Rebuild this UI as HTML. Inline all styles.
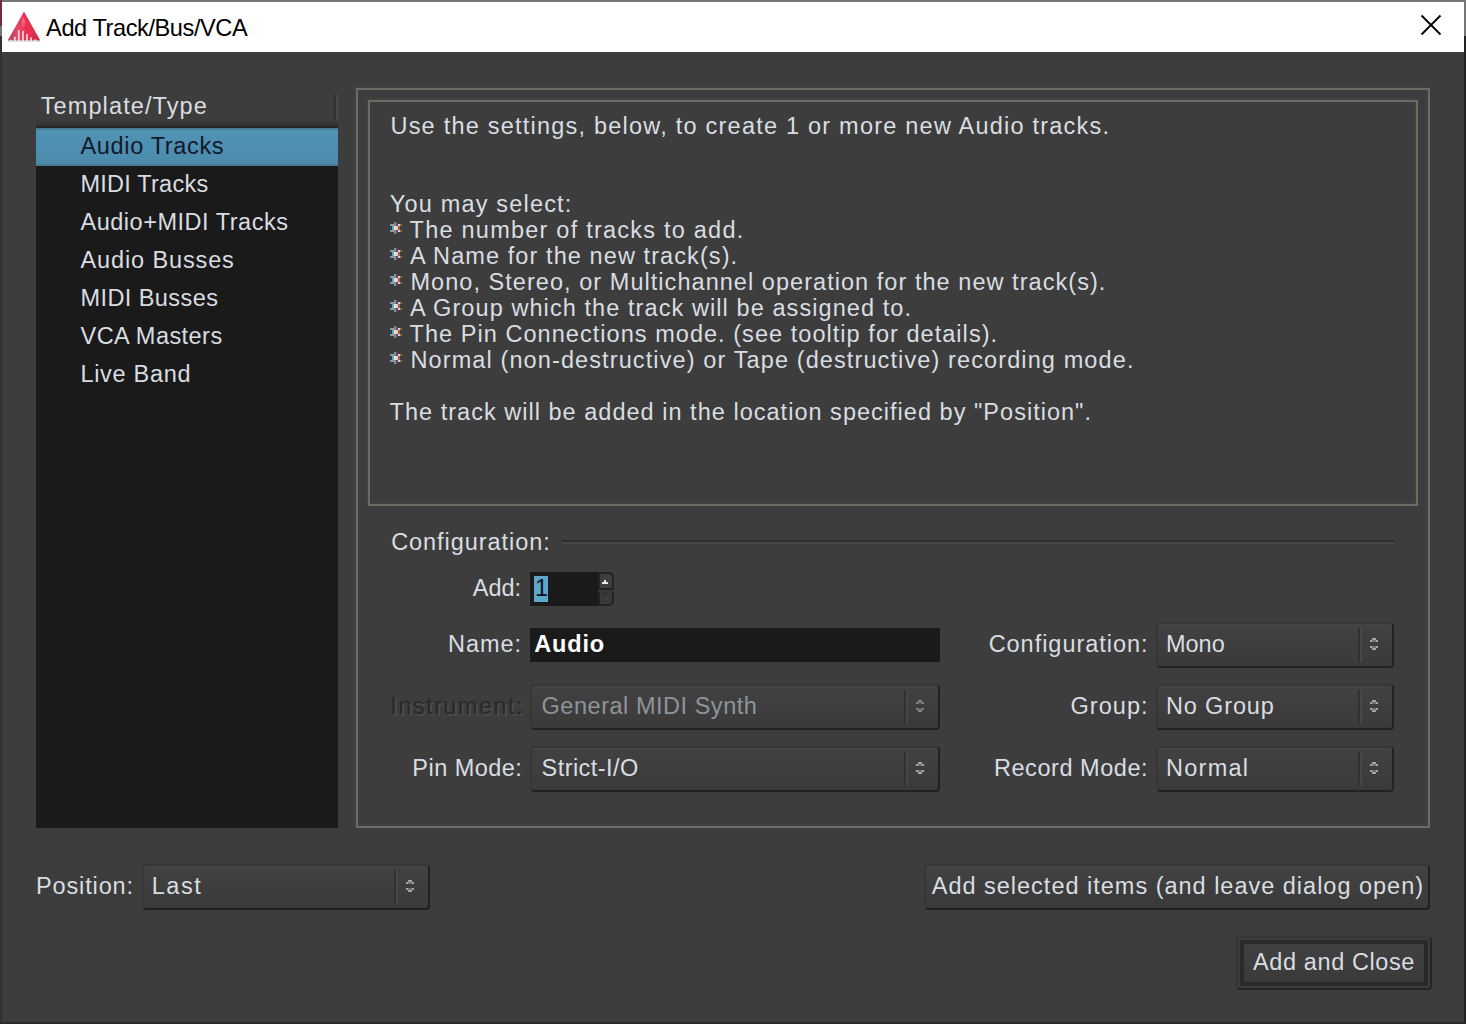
<!DOCTYPE html>
<html>
<head>
<meta charset="utf-8">
<title>Add Track/Bus/VCA</title>
<style>
html,body{margin:0;padding:0;}
body{width:1466px;height:1024px;overflow:hidden;background:#3d3d3d;position:relative;font-family:"Liberation Sans",sans-serif;}
.a{position:absolute;}
.t{position:absolute;white-space:pre;line-height:30px;height:30px;}
/* window chrome */
#titlebar{left:2px;top:2px;width:1462px;height:50px;background:#fff;}
#bt{left:0;top:0;width:1466px;height:2px;background:#767676;}
#bl1{left:0;top:0;width:2px;height:26px;background:#6a3038;}
#bl2{left:0;top:26px;width:2px;height:10px;background:#767676;}
#bl3{left:0;top:36px;width:2px;height:988px;background:#323232;}
#br1{left:1464px;top:0;width:2px;height:36px;background:#767676;}
#br2{left:1464px;top:36px;width:2px;height:988px;background:#222;}
#bb{left:0;top:1022px;width:1466px;height:2px;background:#2a2a2a;}
/* list */
#hdrshade{left:36px;top:120px;width:302px;height:6px;background:linear-gradient(#3d3d3d,#323232);}
#hdrline{left:36px;top:126px;width:302px;height:2px;background:#272425;}
#hsep1{left:334px;top:94px;width:2px;height:26px;background:#323232;}
#hsep2{left:336px;top:94px;width:2px;height:26px;background:#484848;}
#list{left:36px;top:128px;width:302px;height:700px;background:#1a1a1a;}
#sel{left:36px;top:128px;width:302px;height:38px;background:linear-gradient(#4f94b6,#4c8aab);box-shadow:inset 0 2px 0 #497a93, inset 0 -2px 0 #497a93;}
/* frames */
.fd{border:2px solid #41413f;box-sizing:border-box;}
.fl{border:2px solid #6b6c64;box-sizing:border-box;}
/* combo */
.combo{box-sizing:border-box;border-radius:4px;border:2px solid;border-color:#373737 #222 #222 #373737;background:linear-gradient(#444 0,#444 2px,#414141 2px,#3a3a3a 100%);background-clip:padding-box;}
.csep{width:2px;height:34px;background:#313131;box-shadow:2px 0 0 #474747;}
.btn{box-sizing:border-box;border-radius:4px;border:2px solid;border-color:#373737 #222 #222 #373737;background:linear-gradient(#444 0,#444 2px,#414141 2px,#3a3a3a 100%);background-clip:padding-box;}
</style>
</head>
<body>
<!-- window chrome -->
<div class="a" id="titlebar"></div>
<div class="a" id="bt"></div>
<div class="a" id="bl1"></div><div class="a" id="bl2"></div><div class="a" id="bl3"></div>
<div class="a" id="br1"></div><div class="a" id="br2"></div>
<div class="a" id="bb"></div>
<!-- app icon -->
<svg class="a" style="left:4px;top:8px" width="40" height="38" viewBox="4 8 40 38">
  <defs>
    <linearGradient id="ig" x1="0" y1="0" x2="1" y2="0"><stop offset="0" stop-color="#b93653"/><stop offset="0.28" stop-color="#e04a68"/><stop offset="0.55" stop-color="#f02c4e"/><stop offset="0.8" stop-color="#d83452"/><stop offset="1" stop-color="#b8304c"/></linearGradient>
    <linearGradient id="ih" x1="0" y1="0" x2="0" y2="1"><stop offset="0" stop-color="#fff" stop-opacity="0.4"/><stop offset="1" stop-color="#fff" stop-opacity="0"/></linearGradient>
    <filter id="ib" x="-10%" y="-10%" width="120%" height="120%"><feGaussianBlur stdDeviation="0.75"/></filter>
  </defs>
  <g filter="url(#ib)">
    <path d="M24 11.6 L40.3 40.6 L7.7 40.6 Z" fill="url(#ig)"/>
    <path d="M23 17 L25.5 22 L24 30 L20 30 Z" fill="url(#ih)"/>
    <rect x="8" y="40.2" width="32" height="1.4" fill="#b0b0b0" opacity="0.7"/>
    <g fill="#f6eef0" opacity="0.85">
    <rect x="13.9" y="36.4" width="1.8" height="6" rx="0.9"/>
    <rect x="17.9" y="29.8" width="1.8" height="12.6" rx="0.9"/>
    <rect x="22" y="30.6" width="1.8" height="11.8" rx="0.9"/>
    <rect x="26.1" y="33.8" width="1.8" height="8.6" rx="0.9"/>
    <rect x="30.2" y="37.2" width="1.8" height="5.2" rx="0.9"/>
    <rect x="34.3" y="39.2" width="1.8" height="3.2" rx="0.9"/>
    <rect x="10" y="39.6" width="1.8" height="2.8" rx="0.9"/>
    </g>
  </g>
</svg>
<!-- close X -->
<svg class="a" style="left:1416px;top:10px" width="30" height="30" viewBox="0 0 30 30">
  <path d="M5.5 5.5 L24.5 24.5 M24.5 5.5 L5.5 24.5" stroke="#000" stroke-width="1.8" fill="none"/>
</svg>
<!-- list -->
<div class="a" id="hdrshade"></div><div class="a" id="hdrline"></div>
<div class="a" id="hsep1"></div><div class="a" id="hsep2"></div>
<div class="a" id="list"></div>
<div class="a" id="sel"></div>
<!-- frames: outer -->
<div class="a fd" style="left:354px;top:86px;width:1074px;height:740px"></div>
<div class="a fl" style="left:356px;top:88px;width:1074px;height:740px"></div>
<!-- frames: inner -->
<div class="a fd" style="left:366px;top:98px;width:1050px;height:406px"></div>
<div class="a fl" style="left:368px;top:100px;width:1050px;height:406px"></div>
<!-- config separator -->
<div class="a" style="left:562px;top:540px;width:832px;height:2px;background:#2e2e2e"></div>
<div class="a" style="left:562px;top:542px;width:832px;height:2px;background:#474747"></div>
<!-- spin button -->
<div class="a" style="left:530px;top:572px;width:84px;height:34px;background:#232323;border-radius:0 5px 5px 0"></div>
<div class="a" style="left:530px;top:572px;width:68px;height:34px;background:#1a1a1a"></div>
<div class="a" style="left:534px;top:576px;width:14px;height:26px;background:#5ea7cb"></div>
<div class="a" style="left:600px;top:574px;width:12px;height:14px;background:#3e3e3e;border-radius:0 3px 0 0"></div>
<div class="a" style="left:600px;top:592px;width:12px;height:12px;background:#3a3a3a;border-radius:0 0 3px 0"></div>
<div class="a" style="left:598px;top:590px;width:16px;height:2px;background:#383838"></div>
<svg class="a" style="left:602px;top:580px" width="6" height="4" viewBox="0 0 6 4" shape-rendering="crispEdges"><path d="M2 0h2v2h-2z M0 2h6v2h-6z" fill="#e6e6e6"/></svg>
<svg class="a" style="left:602px;top:592px" width="6" height="4" viewBox="0 0 6 4" shape-rendering="crispEdges"><path d="M0 0h6v2h-6z M2 2h2v2h-2z" fill="#323232"/></svg>
<!-- name entry -->
<div class="a" style="left:530px;top:628px;width:410px;height:34px;background:#1a1a1a"></div>
<!-- combos -->
<div class="a combo" style="left:530px;top:684px;width:410px;height:46px"></div>
<div class="a combo" style="left:530px;top:746px;width:410px;height:46px"></div>
<div class="a combo" style="left:1156px;top:622px;width:238px;height:46px"></div>
<div class="a combo" style="left:1156px;top:684px;width:238px;height:46px"></div>
<div class="a combo" style="left:1156px;top:746px;width:238px;height:46px"></div>
<div class="a combo" style="left:142px;top:864px;width:288px;height:46px"></div>
<!-- combo separators -->
<div class="a csep" style="left:904px;top:690px"></div>
<div class="a csep" style="left:904px;top:752px"></div>
<div class="a csep" style="left:1358px;top:628px"></div>
<div class="a csep" style="left:1358px;top:690px"></div>
<div class="a csep" style="left:1358px;top:752px"></div>
<div class="a csep" style="left:394px;top:870px"></div>
<!-- combo arrows -->
<svg class="a" style="left:916px;top:700px" width="8" height="12" viewBox="0 0 8 12" shape-rendering="crispEdges"><path d="M2 0h4v2h-4z M0 2h2v2h-2z M6 2h2v2h-2z M0 8h2v2h-2z M6 8h2v2h-2z M2 10h4v2h-4z" fill="#83837d"/><path d="M2 2h4v2h-4z M2 8h4v2h-4z" fill="#62625e"/></svg>
<svg class="a" style="left:916px;top:762px" width="8" height="12" viewBox="0 0 8 12" shape-rendering="crispEdges"><path d="M2 0h4v2h-4z M0 2h2v2h-2z M6 2h2v2h-2z M0 8h2v2h-2z M6 8h2v2h-2z M2 10h4v2h-4z" fill="#a6a69e"/><path d="M2 2h4v2h-4z M2 8h4v2h-4z" fill="#74746e"/></svg>
<svg class="a" style="left:1370px;top:638px" width="8" height="12" viewBox="0 0 8 12" shape-rendering="crispEdges"><path d="M2 0h4v2h-4z M0 2h2v2h-2z M6 2h2v2h-2z M0 8h2v2h-2z M6 8h2v2h-2z M2 10h4v2h-4z" fill="#a6a69e"/><path d="M2 2h4v2h-4z M2 8h4v2h-4z" fill="#74746e"/></svg>
<svg class="a" style="left:1370px;top:700px" width="8" height="12" viewBox="0 0 8 12" shape-rendering="crispEdges"><path d="M2 0h4v2h-4z M0 2h2v2h-2z M6 2h2v2h-2z M0 8h2v2h-2z M6 8h2v2h-2z M2 10h4v2h-4z" fill="#a6a69e"/><path d="M2 2h4v2h-4z M2 8h4v2h-4z" fill="#74746e"/></svg>
<svg class="a" style="left:1370px;top:762px" width="8" height="12" viewBox="0 0 8 12" shape-rendering="crispEdges"><path d="M2 0h4v2h-4z M0 2h2v2h-2z M6 2h2v2h-2z M0 8h2v2h-2z M6 8h2v2h-2z M2 10h4v2h-4z" fill="#a6a69e"/><path d="M2 2h4v2h-4z M2 8h4v2h-4z" fill="#74746e"/></svg>
<svg class="a" style="left:406px;top:880px" width="8" height="12" viewBox="0 0 8 12" shape-rendering="crispEdges"><path d="M2 0h4v2h-4z M0 2h2v2h-2z M6 2h2v2h-2z M0 8h2v2h-2z M6 8h2v2h-2z M2 10h4v2h-4z" fill="#a6a69e"/><path d="M2 2h4v2h-4z M2 8h4v2h-4z" fill="#74746e"/></svg>
<!-- buttons -->
<div class="a btn" style="left:924px;top:864px;width:506px;height:46px"></div>
<div class="a" style="left:1236px;top:936px;width:196px;height:54px;box-sizing:border-box;border:2px solid;border-color:#363636 #242424 #242424 #363636;border-radius:4px"></div>
<div class="a" style="left:1240px;top:940px;width:188px;height:46px;box-sizing:border-box;border:4px solid #2a2a2a;background:linear-gradient(#414141,#3a3a3a)"></div>
<!-- asterisks -->
<svg class="a" style="left:390px;top:222px" width="12" height="12" viewBox="0 0 6 6" shape-rendering="crispEdges"><path d="M2 0h1v1h-1z M2 5h1v1h-1z M2 1h1v1h-1z M2 4h1v1h-1z" fill="#4aa8a0"/><path d="M3 0h1v1h-1z M3 5h1v1h-1z" fill="#8c3444"/><path d="M0 1h1v1h-1z M0 4h1v1h-1z" fill="#55a8ee"/><path d="M1 1h1v1h-1z M1 4h1v1h-1z" fill="#dc8850"/><path d="M3 1h1v1h-1z M3 4h1v1h-1z" fill="#9c2c68"/><path d="M4 1h1v1h-1z M4 4h1v1h-1z" fill="#a8e4e4"/><path d="M5 1h1v1h-1z M5 4h1v1h-1z M4 2h1v2h-1z" fill="#9c6834"/><path d="M1 2h1v2h-1z" fill="#58a8c8"/><path d="M2 2h1v2h-1z" fill="#e8e0e0"/><path d="M3 2h1v2h-1z" fill="#e8c8cc"/></svg>\n<svg class="a" style="left:390px;top:248px" width="12" height="12" viewBox="0 0 6 6" shape-rendering="crispEdges"><path d="M2 0h1v1h-1z M2 5h1v1h-1z M2 1h1v1h-1z M2 4h1v1h-1z" fill="#4aa8a0"/><path d="M3 0h1v1h-1z M3 5h1v1h-1z" fill="#8c3444"/><path d="M0 1h1v1h-1z M0 4h1v1h-1z" fill="#55a8ee"/><path d="M1 1h1v1h-1z M1 4h1v1h-1z" fill="#dc8850"/><path d="M3 1h1v1h-1z M3 4h1v1h-1z" fill="#9c2c68"/><path d="M4 1h1v1h-1z M4 4h1v1h-1z" fill="#a8e4e4"/><path d="M5 1h1v1h-1z M5 4h1v1h-1z M4 2h1v2h-1z" fill="#9c6834"/><path d="M1 2h1v2h-1z" fill="#58a8c8"/><path d="M2 2h1v2h-1z" fill="#e8e0e0"/><path d="M3 2h1v2h-1z" fill="#e8c8cc"/></svg>\n<svg class="a" style="left:390px;top:274px" width="12" height="12" viewBox="0 0 6 6" shape-rendering="crispEdges"><path d="M2 0h1v1h-1z M2 5h1v1h-1z M2 1h1v1h-1z M2 4h1v1h-1z" fill="#4aa8a0"/><path d="M3 0h1v1h-1z M3 5h1v1h-1z" fill="#8c3444"/><path d="M0 1h1v1h-1z M0 4h1v1h-1z" fill="#55a8ee"/><path d="M1 1h1v1h-1z M1 4h1v1h-1z" fill="#dc8850"/><path d="M3 1h1v1h-1z M3 4h1v1h-1z" fill="#9c2c68"/><path d="M4 1h1v1h-1z M4 4h1v1h-1z" fill="#a8e4e4"/><path d="M5 1h1v1h-1z M5 4h1v1h-1z M4 2h1v2h-1z" fill="#9c6834"/><path d="M1 2h1v2h-1z" fill="#58a8c8"/><path d="M2 2h1v2h-1z" fill="#e8e0e0"/><path d="M3 2h1v2h-1z" fill="#e8c8cc"/></svg>\n<svg class="a" style="left:390px;top:300px" width="12" height="12" viewBox="0 0 6 6" shape-rendering="crispEdges"><path d="M2 0h1v1h-1z M2 5h1v1h-1z M2 1h1v1h-1z M2 4h1v1h-1z" fill="#4aa8a0"/><path d="M3 0h1v1h-1z M3 5h1v1h-1z" fill="#8c3444"/><path d="M0 1h1v1h-1z M0 4h1v1h-1z" fill="#55a8ee"/><path d="M1 1h1v1h-1z M1 4h1v1h-1z" fill="#dc8850"/><path d="M3 1h1v1h-1z M3 4h1v1h-1z" fill="#9c2c68"/><path d="M4 1h1v1h-1z M4 4h1v1h-1z" fill="#a8e4e4"/><path d="M5 1h1v1h-1z M5 4h1v1h-1z M4 2h1v2h-1z" fill="#9c6834"/><path d="M1 2h1v2h-1z" fill="#58a8c8"/><path d="M2 2h1v2h-1z" fill="#e8e0e0"/><path d="M3 2h1v2h-1z" fill="#e8c8cc"/></svg>\n<svg class="a" style="left:390px;top:326px" width="12" height="12" viewBox="0 0 6 6" shape-rendering="crispEdges"><path d="M2 0h1v1h-1z M2 5h1v1h-1z M2 1h1v1h-1z M2 4h1v1h-1z" fill="#4aa8a0"/><path d="M3 0h1v1h-1z M3 5h1v1h-1z" fill="#8c3444"/><path d="M0 1h1v1h-1z M0 4h1v1h-1z" fill="#55a8ee"/><path d="M1 1h1v1h-1z M1 4h1v1h-1z" fill="#dc8850"/><path d="M3 1h1v1h-1z M3 4h1v1h-1z" fill="#9c2c68"/><path d="M4 1h1v1h-1z M4 4h1v1h-1z" fill="#a8e4e4"/><path d="M5 1h1v1h-1z M5 4h1v1h-1z M4 2h1v2h-1z" fill="#9c6834"/><path d="M1 2h1v2h-1z" fill="#58a8c8"/><path d="M2 2h1v2h-1z" fill="#e8e0e0"/><path d="M3 2h1v2h-1z" fill="#e8c8cc"/></svg>\n<svg class="a" style="left:390px;top:352px" width="12" height="12" viewBox="0 0 6 6" shape-rendering="crispEdges"><path d="M2 0h1v1h-1z M2 5h1v1h-1z M2 1h1v1h-1z M2 4h1v1h-1z" fill="#4aa8a0"/><path d="M3 0h1v1h-1z M3 5h1v1h-1z" fill="#8c3444"/><path d="M0 1h1v1h-1z M0 4h1v1h-1z" fill="#55a8ee"/><path d="M1 1h1v1h-1z M1 4h1v1h-1z" fill="#dc8850"/><path d="M3 1h1v1h-1z M3 4h1v1h-1z" fill="#9c2c68"/><path d="M4 1h1v1h-1z M4 4h1v1h-1z" fill="#a8e4e4"/><path d="M5 1h1v1h-1z M5 4h1v1h-1z M4 2h1v2h-1z" fill="#9c6834"/><path d="M1 2h1v2h-1z" fill="#58a8c8"/><path d="M2 2h1v2h-1z" fill="#e8e0e0"/><path d="M3 2h1v2h-1z" fill="#e8c8cc"/></svg>\n
<!-- text -->
<span class="t" id="title" style="left:46.08px;top:12.82px;color:#000;font-size:23.6px;font-weight:400;letter-spacing:-0.431px;">Add Track/Bus/VCA</span>
<span class="t" id="hdr" style="left:40.74px;top:90.86px;color:#d9dde1;font-size:23.5px;font-weight:400;letter-spacing:1.106px;">Template/Type</span>
<span class="t" id="l0" style="left:80.50px;top:130.86px;color:#14182a;font-size:23.5px;font-weight:400;letter-spacing:0.656px;">Audio Tracks</span>
<span class="t" id="l1" style="left:80.44px;top:168.86px;color:#d9dde1;font-size:23.5px;font-weight:400;letter-spacing:0.237px;">MIDI Tracks</span>
<span class="t" id="l2" style="left:80.50px;top:206.86px;color:#d9dde1;font-size:23.5px;font-weight:400;letter-spacing:0.518px;">Audio+MIDI Tracks</span>
<span class="t" id="l3" style="left:80.50px;top:244.86px;color:#d9dde1;font-size:23.5px;font-weight:400;letter-spacing:0.877px;">Audio Busses</span>
<span class="t" id="l4" style="left:80.44px;top:282.86px;color:#d9dde1;font-size:23.5px;font-weight:400;letter-spacing:0.431px;">MIDI Busses</span>
<span class="t" id="l5" style="left:80.50px;top:320.86px;color:#d9dde1;font-size:23.5px;font-weight:400;letter-spacing:0.453px;">VCA Masters</span>
<span class="t" id="l6" style="left:80.44px;top:358.86px;color:#d9dde1;font-size:23.5px;font-weight:400;letter-spacing:0.698px;">Live Band</span>
<span class="t" id="i0" style="left:390.44px;top:110.86px;color:#d9dde1;font-size:23.5px;font-weight:400;letter-spacing:1.224px;">Use the settings, below, to create 1 or more new Audio tracks.</span>
<span class="t" id="i1" style="left:389.84px;top:188.86px;color:#d9dde1;font-size:23.5px;font-weight:400;letter-spacing:1.177px;">You may select:</span>
<span class="t" id="i2" style="left:409.58px;top:214.86px;color:#d9dde1;font-size:23.5px;font-weight:400;letter-spacing:1.231px;">The number of tracks to add.</span>
<span class="t" id="i3" style="left:410.00px;top:240.86px;color:#d9dde1;font-size:23.5px;font-weight:400;letter-spacing:1.088px;">A Name for the new track(s).</span>
<span class="t" id="i4" style="left:410.44px;top:266.86px;color:#d9dde1;font-size:23.5px;font-weight:400;letter-spacing:1.045px;">Mono, Stereo, or Multichannel operation for the new track(s).</span>
<span class="t" id="i5" style="left:410.00px;top:292.86px;color:#d9dde1;font-size:23.5px;font-weight:400;letter-spacing:1.081px;">A Group which the track will be assigned to.</span>
<span class="t" id="i6" style="left:409.58px;top:318.86px;color:#d9dde1;font-size:23.5px;font-weight:400;letter-spacing:1.044px;">The Pin Connections mode. (see tooltip for details).</span>
<span class="t" id="i7" style="left:410.44px;top:344.86px;color:#d9dde1;font-size:23.5px;font-weight:400;letter-spacing:1.111px;">Normal (non-destructive) or Tape (destructive) recording mode.</span>
<span class="t" id="i8" style="left:389.58px;top:396.86px;color:#d9dde1;font-size:23.5px;font-weight:400;letter-spacing:1.020px;">The track will be added in the location specified by &quot;Position&quot;.</span>
<span class="t" id="cfg" style="left:391.14px;top:526.86px;color:#d9dde1;font-size:23.5px;font-weight:400;letter-spacing:0.945px;">Configuration:</span>
<span class="t" id="add" style="left:472.74px;top:572.86px;color:#d9dde1;font-size:23.5px;font-weight:400;letter-spacing:-0.010px;">Add:</span>
<span class="t" id="one" style="left:534.94px;top:572.86px;color:#101018;font-size:23.5px;font-weight:400;letter-spacing:0.000px;">1</span>
<span class="t" id="name" style="left:447.94px;top:628.86px;color:#d9dde1;font-size:23.5px;font-weight:400;letter-spacing:0.974px;">Name:</span>
<span class="t" id="audio" style="left:534.34px;top:628.86px;color:#ffffff;font-size:23.5px;font-weight:700;letter-spacing:0.809px;">Audio</span>
<span class="t" id="inst" style="left:390.24px;top:690.86px;color:#29292b;font-size:23.5px;font-weight:400;letter-spacing:1.447px;text-shadow:2px 2px 0 #4a4c4c;">Instrument:</span>
<span class="t" id="gms" style="left:541.54px;top:690.86px;color:#8e9499;font-size:23.5px;font-weight:400;letter-spacing:0.527px;">General MIDI Synth</span>
<span class="t" id="pin" style="left:412.34px;top:752.86px;color:#d9dde1;font-size:23.5px;font-weight:400;letter-spacing:0.463px;">Pin Mode:</span>
<span class="t" id="strict" style="left:541.54px;top:752.86px;color:#d9dde1;font-size:23.5px;font-weight:400;letter-spacing:0.457px;">Strict-I/O</span>
<span class="t" id="cfg2" style="left:988.64px;top:628.86px;color:#d9dde1;font-size:23.5px;font-weight:400;letter-spacing:0.976px;">Configuration:</span>
<span class="t" id="mono" style="left:1165.94px;top:628.86px;color:#d9dde1;font-size:23.5px;font-weight:400;letter-spacing:0.006px;">Mono</span>
<span class="t" id="grp" style="left:1070.54px;top:690.86px;color:#d9dde1;font-size:23.5px;font-weight:400;letter-spacing:1.054px;">Group:</span>
<span class="t" id="nogrp" style="left:1165.94px;top:690.86px;color:#d9dde1;font-size:23.5px;font-weight:400;letter-spacing:0.861px;">No Group</span>
<span class="t" id="rec" style="left:993.94px;top:752.86px;color:#d9dde1;font-size:23.5px;font-weight:400;letter-spacing:0.555px;">Record Mode:</span>
<span class="t" id="normal" style="left:1165.94px;top:752.86px;color:#d9dde1;font-size:23.5px;font-weight:400;letter-spacing:1.276px;">Normal</span>
<span class="t" id="pos" style="left:35.94px;top:870.86px;color:#d9dde1;font-size:23.5px;font-weight:400;letter-spacing:0.872px;">Position:</span>
<span class="t" id="last" style="left:151.74px;top:870.86px;color:#d9dde1;font-size:23.5px;font-weight:400;letter-spacing:1.531px;">Last</span>
<span class="t" id="addsel" style="left:931.74px;top:870.86px;color:#d9dde1;font-size:23.5px;font-weight:400;letter-spacing:0.991px;">Add selected items (and leave dialog open)</span>
<span class="t" id="addclose" style="left:1253.04px;top:946.86px;color:#d9dde1;font-size:23.5px;font-weight:400;letter-spacing:0.604px;">Add and Close</span>
</body>
</html>
